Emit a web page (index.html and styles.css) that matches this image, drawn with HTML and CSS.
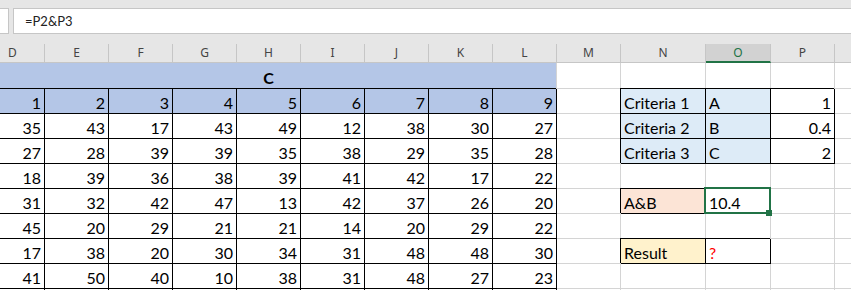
FILE: index.html
```html
<!DOCTYPE html>
<html lang="en">
<head>
    <meta charset="UTF-8">
    <meta name="viewport" content="width=device-width, initial-scale=1.0">
    <title>Sheet</title>
    <link rel="stylesheet" href="styles.css">
</head>
<body>
    <!-- formula bar -->
    <div class="formula-bar">
        <div class="name-box"></div>
        <div class="formula">=P2&amp;P3</div>
    </div>

    <div class="sheet">
        <!-- column headers -->
        <div class="hd">D</div><div class="hd">E</div><div class="hd">F</div><div class="hd">G</div><div class="hd">H</div>
        <div class="hd">I</div><div class="hd">J</div><div class="hd">K</div><div class="hd">L</div><div class="hd">M</div>
        <div class="hd">N</div><div class="hd on">O</div><div class="hd">P</div><div class="hd"></div>

        <!-- row: merged C -->
        <div class="c merge blue">C</div>
        <div class="c"></div><div class="c"></div><div class="c"></div><div class="c"></div><div class="c"></div>

        <!-- row: 1..9 -->
        <div class="c b blue n">1</div><div class="c b blue n">2</div><div class="c b blue n">3</div>
        <div class="c b blue n">4</div><div class="c b blue n">5</div><div class="c b blue n">6</div>
        <div class="c b blue n">7</div><div class="c b blue n">8</div><div class="c b blue n">9</div>
        <div class="c"></div>
        <div class="c b lblue">Criteria 1</div><div class="c b lblue">A</div><div class="c b n">1</div>
        <div class="c"></div>

        <div class="c b n">35</div><div class="c b n">43</div><div class="c b n">17</div>
        <div class="c b n">43</div><div class="c b n">49</div><div class="c b n">12</div>
        <div class="c b n">38</div><div class="c b n">30</div><div class="c b n">27</div>
        <div class="c"></div>
        <div class="c b lblue">Criteria 2</div><div class="c b lblue">B</div><div class="c b n">0.4</div>
        <div class="c"></div>

        <div class="c b n">27</div><div class="c b n">28</div><div class="c b n">39</div>
        <div class="c b n">39</div><div class="c b n">35</div><div class="c b n">38</div>
        <div class="c b n">29</div><div class="c b n">35</div><div class="c b n">28</div>
        <div class="c"></div>
        <div class="c b lblue">Criteria 3</div><div class="c b lblue">C</div><div class="c b n">2</div>
        <div class="c"></div>

        <div class="c b n">18</div><div class="c b n">39</div><div class="c b n">36</div>
        <div class="c b n">38</div><div class="c b n">39</div><div class="c b n">41</div>
        <div class="c b n">42</div><div class="c b n">17</div><div class="c b n">22</div>
        <div class="c"></div><div class="c"></div><div class="c"></div><div class="c"></div><div class="c"></div>

        <div class="c b n">31</div><div class="c b n">32</div><div class="c b n">42</div>
        <div class="c b n">47</div><div class="c b n">13</div><div class="c b n">42</div>
        <div class="c b n">37</div><div class="c b n">26</div><div class="c b n">20</div>
        <div class="c"></div>
        <div class="c b peach">A&amp;B</div>
        <div class="c b sel">10.4<span class="handle"></span></div>
        <div class="c"></div><div class="c"></div>

        <div class="c b n">45</div><div class="c b n">20</div><div class="c b n">29</div>
        <div class="c b n">21</div><div class="c b n">21</div><div class="c b n">14</div>
        <div class="c b n">20</div><div class="c b n">29</div><div class="c b n">22</div>
        <div class="c"></div><div class="c"></div><div class="c"></div><div class="c"></div><div class="c"></div>

        <div class="c b n">17</div><div class="c b n">38</div><div class="c b n">20</div>
        <div class="c b n">30</div><div class="c b n">34</div><div class="c b n">31</div>
        <div class="c b n">48</div><div class="c b n">48</div><div class="c b n">30</div>
        <div class="c"></div>
        <div class="c b cream">Result</div><div class="c b red">?</div>
        <div class="c"></div><div class="c"></div>

        <div class="c b n">41</div><div class="c b n">50</div><div class="c b n">40</div>
        <div class="c b n">10</div><div class="c b n">38</div><div class="c b n">31</div>
        <div class="c b n">48</div><div class="c b n">27</div><div class="c b n">23</div>
        <div class="c"></div><div class="c"></div><div class="c"></div><div class="c"></div><div class="c"></div>

        <!-- next row, only its top edge is on screen -->
        <div class="c b"></div><div class="c b"></div><div class="c b"></div>
        <div class="c b"></div><div class="c b"></div><div class="c b"></div>
        <div class="c b"></div><div class="c b"></div><div class="c b"></div>
        <div class="c"></div><div class="c"></div><div class="c"></div><div class="c"></div><div class="c"></div>
    </div>
</body>
</html>
```

FILE: styles.css
```css
body {
    margin: 0;
    width: 851px;
    height: 290px;
    overflow: hidden;
    background: #fff;
    font-family: Lato, "Liberation Sans", sans-serif;
}

/* formula bar */
.formula-bar {
    height: 44px;
    box-sizing: border-box;
    padding-top: 8px;
    background: #e6e6e6;
    display: flex;
    gap: 4px;
}
.name-box {
    width: 10px;
    height: 26px;
    margin-left: -1px;
    box-sizing: border-box;
    background: #fff;
    border: 1px solid #c6c6c6;
}
.formula {
    flex: 1;
    height: 26px;
    margin-right: -2px;
    box-sizing: border-box;
    padding-left: 11px;
    background: #fff;
    border: 1px solid #c6c6c6;
    font-size: 13px;
    line-height: 24px;
    color: #222;
}

/* grid */
.sheet {
    display: grid;
    grid-template-columns: repeat(10, 64px) 85px 65px 64px 80px;
    grid-template-rows: 19px 26px;
    grid-auto-rows: 25px;
    margin-left: -19px;
}
.hd {
    box-sizing: border-box;
    background: #e6e6e6;
    border-right: 1px solid #c6c6c6;
    border-bottom: 1px solid #c6c6c6;
    font-family: "Noto Sans", sans-serif;
    font-size: 12px;
    line-height: 18px;
    color: #444;
    text-align: center;
}
.hd.on {
    background: #d2d2d2;
    border-bottom: 2px solid #217346;
    color: #217346;
}

.c {
    box-sizing: border-box;
    border-right: 1px solid #d4d4d4;
    border-bottom: 1px solid #d4d4d4;
    padding: 4px 3px 0;
    font-size: 16px;
    line-height: 20px;
    color: #000;
    white-space: nowrap;
}
.n { text-align: right; }
.b {
    border-color: #000;
    box-shadow: -1px -1px 0 #000;
}
.merge {
    grid-column: span 9;
    padding-top: 5px;
    text-align: center;
    font-weight: bold;
}

.blue { background: #b4c6e7; }
.lblue { background: #ddebf7; }
.peach { background: #fce4d6; }
.cream { background: #fff2cc; }
.red { color: #ff0000; }

/* active cell */
.sel {
    position: relative;
    z-index: 2;
}
.sel::after {
    content: "";
    position: absolute;
    top: -2px;
    left: -2px;
    right: -1px;
    bottom: -1px;
    border: 2px solid #217346;
}
.handle {
    position: absolute;
    right: -2px;
    bottom: -3px;
    width: 6px;
    height: 6px;
    background: #217346;
    z-index: 1;
}
```
